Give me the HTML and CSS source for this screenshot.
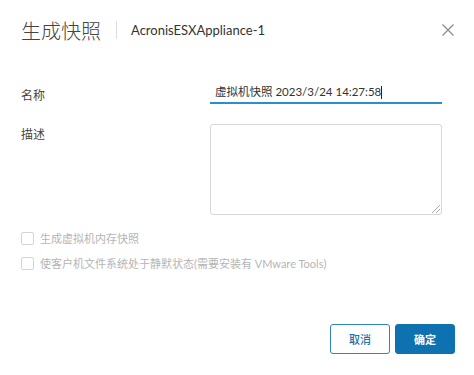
FILE: index.html
```
<!DOCTYPE html>
<html lang="zh">
<head>
<meta charset="utf-8">
<link rel="stylesheet" href="styles.css">
</head>
<body>
<div class="dialog">
  <div class="header">
    <h1 class="title">生成快照</h1>
    <span class="sep"></span>
    <span class="subtitle">AcronisESXAppliance-1</span>
    <span class="close">
      <svg width="12" height="12" viewBox="0 0 12 12"><path d="M0.5 0.5 L11.5 11.5 M11.5 0.5 L0.5 11.5" stroke="#8a8a8a" stroke-width="1.2" fill="none"/></svg>
    </span>
  </div>
  <div class="form">
    <div class="row row-name">
      <label class="label">名称</label>
      <div class="input">虚拟机快照 2023/3/24 14:27:58<span class="caret"></span></div>
    </div>
    <div class="row row-desc">
      <label class="label">描述</label>
      <div class="textarea"><span class="grip"></span></div>
    </div>
    <div class="checks">
      <div class="check"><span class="box"></span><span class="ctext">生成虚拟机内存快照</span></div>
      <div class="check"><span class="box"></span><span class="ctext">使客户机文件系统处于静默状态(需要安装有 VMware Tools)</span></div>
    </div>
  </div>
  <div class="footer">
    <button class="btn btn-outline">取消</button>
    <button class="btn btn-primary">确定</button>
  </div>
</div>
</body>
</html>
```
FILE: styles.css
```
html, body {
  margin: 0;
  padding: 0;
  background: #fff;
}
body {
  width: 474px;
  height: 375px;
  font-family: "Lato", "Noto Sans CJK SC", sans-serif;
  color: #333;
}
.dialog {
  padding: 0 19px 0 21px;
}
.header {
  display: flex;
  align-items: center;
  height: 60px;
}
.title {
  margin: 0;
  font-weight: 300;
  font-size: 20px;
  color: #444;
  font-family: "Noto Sans CJK SC", sans-serif;
}
.sep {
  width: 1px;
  height: 18px;
  background: #ddd;
  margin: 0 14px 0 15px;
}
.subtitle {
  font-size: 13px;
  color: #333;
  flex: 1;
}
.close {
  display: flex;
  width: 12px;
  height: 12px;
  margin-right: 1px;
}
.form {
  padding-top: 22px;
}
.row {
  display: flex;
}
.label {
  width: 189px;
  font-size: 12px;
  color: #444;
}
.row-name {
  height: 22px;
  align-items: flex-start;
}
.row-name .label {
  padding-top: 4px;
}
.input {
  width: 227px;
  height: 20px;
  padding-left: 5px;
  border-bottom: 2px solid #2b8fce;
  font-size: 11.5px;
  line-height: 22px;
  color: #333;
  display: flex;
  align-items: center;
}
.caret {
  display: inline-block;
  width: 1px;
  height: 13px;
  background: #222;
}
.row-desc {
  margin-top: 20px;
}
.row-desc .label {
  padding-top: 1px;
}
.textarea {
  position: relative;
  width: 230px;
  height: 89px;
  border: 1px solid #d7d7d7;
  border-radius: 3px;
}
.grip {
  position: absolute;
  right: 1px;
  bottom: 1px;
  width: 8px;
  height: 8px;
  background: linear-gradient(135deg, transparent 45%, #aaa 45%, #aaa 52%, transparent 52%, transparent 70%, #aaa 70%, #aaa 77%, transparent 77%);
}
.checks {
  margin-top: 17px;
  display: flex;
  flex-direction: column;
  gap: 13px;
}
.check {
  display: flex;
  align-items: center;
  height: 12px;
}
.box {
  width: 11px;
  height: 11px;
  border: 1px solid #d4d4d4;
  border-radius: 2px;
  margin-right: 6px;
}
.ctext {
  font-size: 11px;
  color: #b5b5b5;
}
.footer {
  display: flex;
  justify-content: flex-end;
  gap: 5px;
  margin-top: 55px;
}
.btn {
  width: 60px;
  height: 30px;
  border-radius: 3px;
  font-size: 11px;
  font-family: "Noto Sans CJK SC", sans-serif;
  padding: 0;
  cursor: pointer;
}
.btn-outline {
  background: #fff;
  border: 1px solid #2d86c0;
  color: #1c73ad;
  font-weight: 500;
}
.btn-primary {
  background: #0f72b0;
  border: 1px solid #0f72b0;
  color: #fff;
  font-weight: 600;
}
```
